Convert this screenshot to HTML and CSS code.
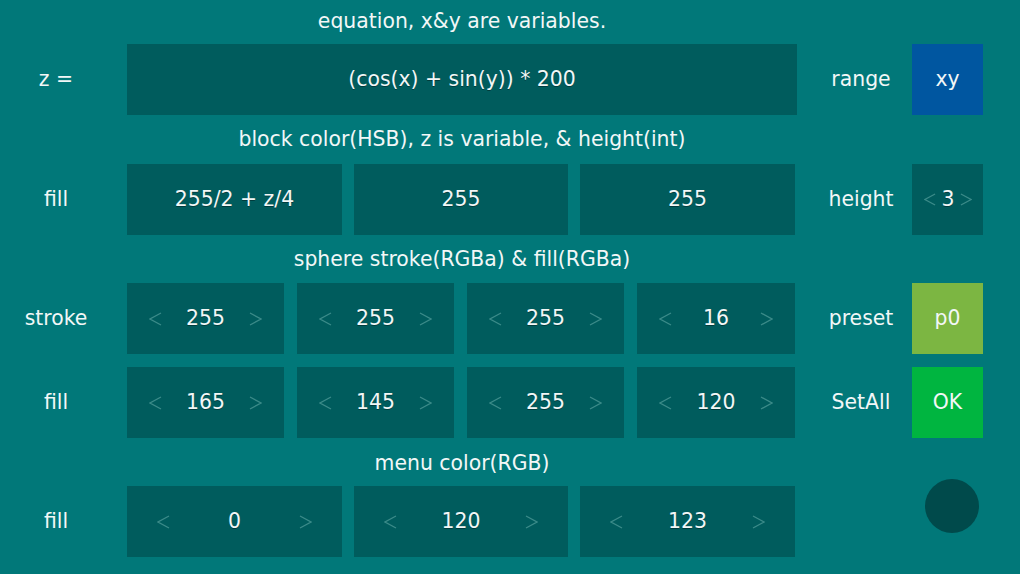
FILE: index.html
```html
<!DOCTYPE html>
<html>
<head>
<meta charset="utf-8">
<link rel="stylesheet" href="styles.css">
</head>
<body>
<div class="panel">
  <div class="heading h1">equation, x&amp;y are variables.</div>

  <div class="label r1">z =</div>
  <div class="box eq r1">(cos(x) + sin(y)) * 200</div>
  <div class="rlabel r1">range</div>
  <div class="sq blue r1">xy</div>

  <div class="heading h2">block color(HSB), z is variable, &amp; height(int)</div>

  <div class="label r2">fill</div>
  <div class="cols3 r2">
    <div class="box">255/2 + z/4</div>
    <div class="box">255</div>
    <div class="box">255</div>
  </div>
  <div class="rlabel r2">height</div>
  <div class="sq dark stepper small r2">
    <svg class="arr" viewBox="0 0 13 14"><polyline points="12,1 1,7 12,13"/></svg>
    <span>3</span>
    <svg class="arr" viewBox="0 0 13 14"><polyline points="1,1 12,7 1,13"/></svg>
  </div>

  <div class="heading h3">sphere stroke(RGBa) &amp; fill(RGBa)</div>

  <div class="label r3">stroke</div>
  <div class="cols4 r3">
    <div class="box stepper"><svg class="arr" viewBox="0 0 13 14"><polyline points="12,1 1,7 12,13"/></svg><span>255</span><svg class="arr" viewBox="0 0 13 14"><polyline points="1,1 12,7 1,13"/></svg></div>
    <div class="box stepper"><svg class="arr" viewBox="0 0 13 14"><polyline points="12,1 1,7 12,13"/></svg><span>255</span><svg class="arr" viewBox="0 0 13 14"><polyline points="1,1 12,7 1,13"/></svg></div>
    <div class="box stepper"><svg class="arr" viewBox="0 0 13 14"><polyline points="12,1 1,7 12,13"/></svg><span>255</span><svg class="arr" viewBox="0 0 13 14"><polyline points="1,1 12,7 1,13"/></svg></div>
    <div class="box stepper"><svg class="arr" viewBox="0 0 13 14"><polyline points="12,1 1,7 12,13"/></svg><span>16</span><svg class="arr" viewBox="0 0 13 14"><polyline points="1,1 12,7 1,13"/></svg></div>
  </div>
  <div class="rlabel r3">preset</div>
  <div class="sq lime r3">p0</div>

  <div class="label r4">fill</div>
  <div class="cols4 r4">
    <div class="box stepper"><svg class="arr" viewBox="0 0 13 14"><polyline points="12,1 1,7 12,13"/></svg><span>165</span><svg class="arr" viewBox="0 0 13 14"><polyline points="1,1 12,7 1,13"/></svg></div>
    <div class="box stepper"><svg class="arr" viewBox="0 0 13 14"><polyline points="12,1 1,7 12,13"/></svg><span>145</span><svg class="arr" viewBox="0 0 13 14"><polyline points="1,1 12,7 1,13"/></svg></div>
    <div class="box stepper"><svg class="arr" viewBox="0 0 13 14"><polyline points="12,1 1,7 12,13"/></svg><span>255</span><svg class="arr" viewBox="0 0 13 14"><polyline points="1,1 12,7 1,13"/></svg></div>
    <div class="box stepper"><svg class="arr" viewBox="0 0 13 14"><polyline points="12,1 1,7 12,13"/></svg><span>120</span><svg class="arr" viewBox="0 0 13 14"><polyline points="1,1 12,7 1,13"/></svg></div>
  </div>
  <div class="rlabel r4">SetAll</div>
  <div class="sq green r4">OK</div>

  <div class="heading h4">menu color(RGB)</div>

  <div class="label r5">fill</div>
  <div class="cols3 r5">
    <div class="box stepper wide"><svg class="arr" viewBox="0 0 13 14"><polyline points="12,1 1,7 12,13"/></svg><span>0</span><svg class="arr" viewBox="0 0 13 14"><polyline points="1,1 12,7 1,13"/></svg></div>
    <div class="box stepper wide"><svg class="arr" viewBox="0 0 13 14"><polyline points="12,1 1,7 12,13"/></svg><span>120</span><svg class="arr" viewBox="0 0 13 14"><polyline points="1,1 12,7 1,13"/></svg></div>
    <div class="box stepper wide"><svg class="arr" viewBox="0 0 13 14"><polyline points="12,1 1,7 12,13"/></svg><span>123</span><svg class="arr" viewBox="0 0 13 14"><polyline points="1,1 12,7 1,13"/></svg></div>
  </div>
  <div class="dot"></div>
</div>
</body>
</html>
```

FILE: styles.css
```css
html, body {
  margin: 0;
  padding: 0;
  background: #017879;
}
body {
  width: 1020px;
  height: 574px;
  overflow: hidden;
  font-family: "DejaVu Sans", "Liberation Sans", sans-serif;
  font-size: 20.4px;
  color: #f2f7f7;
}
.panel {
  display: grid;
  grid-template-columns: 127px 670px 115px 71px;
  grid-template-rows: 44px 71px 49px 71px 48px 71px 13px 71px 48px 71px;
}
.heading {
  grid-column: 2;
  display: flex;
  align-items: center;
  justify-content: center;
  white-space: nowrap;
}
.h1 { grid-row: 1; padding-bottom: 2px; }
.h2 { grid-row: 3; padding-bottom: 1px; }
.h3 { grid-row: 5; padding-bottom: 0; }
.h4 { grid-row: 9; padding-top: 1px; }

.label, .rlabel {
  display: flex;
  align-items: center;
  justify-content: center;
  padding-bottom: 2px;
}
.label {
  grid-column: 1;
  padding-right: 15px;
}
.rlabel {
  grid-column: 3;
  padding-left: 13px;
}
.r1 { grid-row: 2; }
.r2 { grid-row: 4; }
.r3 { grid-row: 6; }
.r4 { grid-row: 8; }
.r5 { grid-row: 10; }

.box {
  background: #005c5d;
  display: flex;
  align-items: center;
  justify-content: center;
  padding-bottom: 2px;
  text-shadow: 0 1px 0 rgba(0, 0, 0, 0.35);
}
.eq { grid-column: 2; }
.cols3, .cols4 {
  grid-column: 2;
  display: grid;
  column-gap: 12px;
}
.cols3 { grid-template-columns: 215px 214px 215px; }
.cols4 { grid-template-columns: 157px 157px 157px 158px; column-gap: 13px; }

.sq {
  grid-column: 4;
  display: flex;
  align-items: center;
  justify-content: center;
  padding-bottom: 2px;
}
.blue { background: #0056a0; }
.dark { background: #005c5d; text-shadow: 0 1px 0 rgba(0, 0, 0, 0.35); }
.lime { background: #7cb642; }
.green { background: #00b540; }

.stepper {
  justify-content: space-between;
  padding: 0 22px 2px;
}
.stepper.wide { padding: 0 30px 2px; }
.stepper.small {
  justify-content: space-between;
  padding: 0 11px 2px 12px;
}
.arr {
  width: 13px;
  height: 14px;
  margin-top: 2px;
  fill: none;
  stroke: #3b8b89;
  stroke-width: 1.3;
  flex: none;
}
.small .arr { width: 12px; height: 13px; }

.dot {
  grid-column: 4;
  grid-row: 9 / 11;
  align-self: start;
  justify-self: start;
  margin-top: 41px;
  margin-left: 13px;
  width: 54px;
  height: 54px;
  border-radius: 50%;
  background: #004a4b;
}
```
